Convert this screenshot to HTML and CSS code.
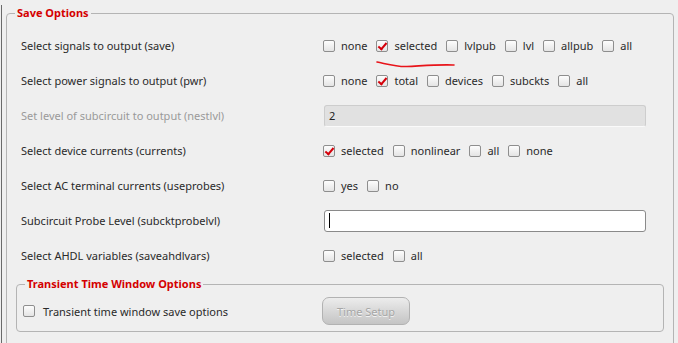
FILE: index.html
```html
<!DOCTYPE html>
<html lang="en">
<head>
    <meta charset="UTF-8">
    <title>Save Options</title>
    <link rel="stylesheet" href="styles.css">
</head>
<body>
    <div class="frame">
        <fieldset class="group">
            <legend>Save Options</legend>

            <div class="form-grid">
                <div class="label">Select signals to output (save)</div>
                <div class="choices">
                    <label class="check"><span class="box"></span>none</label>
                    <label class="check"><span class="box checked"></span>selected</label>
                    <label class="check"><span class="box"></span>lvlpub</label>
                    <label class="check"><span class="box"></span>lvl</label>
                    <label class="check"><span class="box"></span>allpub</label>
                    <label class="check"><span class="box"></span>all</label>
                </div>

                <div class="label">Select power signals to output (pwr)</div>
                <div class="choices">
                    <label class="check"><span class="box"></span>none</label>
                    <label class="check"><span class="box checked"></span>total</label>
                    <label class="check"><span class="box"></span>devices</label>
                    <label class="check"><span class="box"></span>subckts</label>
                    <label class="check"><span class="box"></span>all</label>
                </div>

                <div class="label disabled">Set level of subcircuit to output (nestlvl)</div>
                <div class="choices">
                    <div class="field field-disabled">2</div>
                </div>

                <div class="label">Select device currents (currents)</div>
                <div class="choices">
                    <label class="check"><span class="box checked"></span>selected</label>
                    <label class="check"><span class="box"></span>nonlinear</label>
                    <label class="check"><span class="box"></span>all</label>
                    <label class="check"><span class="box"></span>none</label>
                </div>

                <div class="label">Select AC terminal currents (useprobes)</div>
                <div class="choices">
                    <label class="check"><span class="box"></span>yes</label>
                    <label class="check"><span class="box"></span>no</label>
                </div>

                <div class="label">Subcircuit Probe Level (subcktprobelvl)</div>
                <div class="choices">
                    <div class="field field-edit"><span class="caret"></span></div>
                </div>

                <div class="label">Select AHDL variables (saveahdlvars)</div>
                <div class="choices">
                    <label class="check"><span class="box"></span>selected</label>
                    <label class="check"><span class="box"></span>all</label>
                </div>
            </div>

            <fieldset class="group inner">
                <legend>Transient Time Window Options</legend>
                <div class="inner-row">
                    <label class="check inner-check"><span class="box"></span>Transient time window save options</label>
                    <button class="btn-time" disabled>Time Setup</button>
                </div>
            </fieldset>
        </fieldset>

        <!-- hand drawn mark under "selected" -->
        <svg class="scribble" width="90" height="12" viewBox="0 0 90 12">
            <path d="M2 2 C 12 4, 22 7, 32 6.5 C 45 6, 60 4.5, 78 5 L 79 5" fill="none" stroke="#e8141a" stroke-width="1.6" stroke-linecap="round"/>
        </svg>
    </div>
</body>
</html>
```

FILE: styles.css
```css
:root {
    --bg: #efefef;
    --text: #2a2a2a;
    --text-disabled: #9a9a9a;
    --legend: #d40000;
    --group-border: #b4b4b4;
    --box-border: #8e8e8e;
}

* {
    box-sizing: border-box;
}

body {
    margin: 0;
    background: var(--bg);
    font-family: "Noto Sans", "DejaVu Sans", sans-serif;
    font-size: 11px;
    color: var(--text);
    overflow: hidden;
}

.frame {
    position: relative;
    height: 343px;
    margin-left: 1px;
    border-left: 1px solid #6a6a6a;
    padding: 0 4px 0 4px;
}

.group {
    margin: 0;
    padding: 0;
    border: 1px solid var(--group-border);
    border-radius: 4px;
}

.group > legend {
    margin-left: 8px;
    padding: 0 2px;
    color: var(--legend);
    font-weight: bold;
    font-size: 11px;
    line-height: 16px;
}

.frame > .group {
    margin-top: 5px;
    height: 360px;
}

.form-grid {
    display: grid;
    grid-template-columns: 302px 1fr;
    grid-auto-rows: 35px;
    align-items: center;
    padding: 7px 0 0 14px;
}

.label.disabled {
    color: var(--text-disabled);
}

.choices {
    display: flex;
    align-items: center;
}

.check {
    display: flex;
    align-items: center;
    gap: 6px;
    margin-right: 9px;
}

.box {
    position: relative;
    width: 12px;
    height: 12px;
    border: 1px solid var(--box-border);
    border-radius: 2px;
    background: linear-gradient(#fdfdfd, #e4e4e4);
}

.box.checked::after {
    content: "";
    position: absolute;
    left: 3px;
    top: 0px;
    width: 3px;
    height: 7px;
    border: solid #d4000a;
    border-width: 0 2.5px 2.5px 0;
    transform: rotate(40deg);
}

.field {
    width: 322px;
    height: 22px;
    margin-left: 1px;
    border-radius: 3px;
    padding: 0 4px;
    display: flex;
    align-items: center;
}

.field-disabled {
    background: #e1e1e1;
    border: 1px solid #cdcdcd;
    border-bottom-color: #fafafa;
    color: #222;
}

.field-edit {
    background: #fff;
    border: 1px solid #8a8a8a;
}

.caret {
    width: 1px;
    height: 15px;
    background: #000;
}

.group.inner {
    margin: 3px 9px 0 9px;
    height: 56px;
}

.group.inner > legend {
    margin-left: 8px;
}

.inner-row {
    display: flex;
    align-items: center;
    padding: 5px 0 0 6px;
}

.inner-check {
    width: 299px;
    gap: 8px;
    margin-right: 0;
}

.btn-time {
    width: 88px;
    height: 28px;
    border: 1px solid #b2b2b2;
    border-radius: 7px;
    background: linear-gradient(#ececec, #c4c4c4);
    color: #a6a6a6;
    text-shadow: 0 1px 0 #f4f4f4;
    font-family: inherit;
    font-size: 11px;
    padding: 0;
}

.scribble {
    position: absolute;
    left: 373px;
    top: 55px;
}
```
